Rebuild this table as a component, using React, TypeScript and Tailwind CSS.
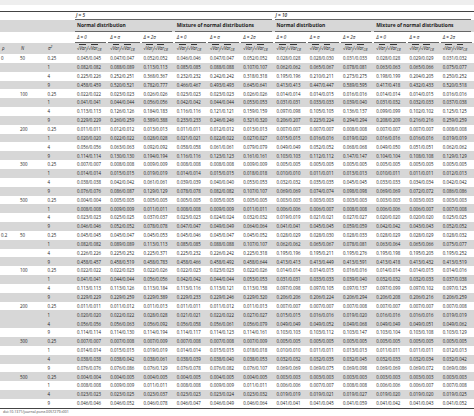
const GRID = "grid grid-cols-[19px_27px_29px_repeat(12,minmax(0,1fr))]";

const DATA: [string, string, string, string][] = [
  ["0", "50", "0.25", "0.045/0.045 0.047/0.047 0.052/0.052 0.046/0.046 0.047/0.047 0.052/0.052 0.028/0.028 0.028/0.030 0.031/0.033 0.028/0.028 0.029/0.029 0.031/0.032"],
  ["", "", "1", "0.082/0.082 0.088/0.089 0.113/0.113 0.085/0.085 0.088/0.088 0.107/0.107 0.062/0.062 0.065/0.067 0.078/0.081 0.063/0.063 0.065/0.066 0.075/0.077"],
  ["", "", "4", "0.225/0.226 0.252/0.251 0.368/0.367 0.232/0.232 0.242/0.242 0.318/0.318 0.195/0.196 0.210/0.211 0.273/0.275 0.198/0.199 0.204/0.205 0.250/0.252"],
  ["", "", "9", "0.458/0.459 0.520/0.521 0.782/0.777 0.466/0.467 0.493/0.493 0.645/0.641 0.413/0.413 0.447/0.447 0.589/0.595 0.417/0.418 0.432/0.433 0.520/0.518"],
  ["", "100", "0.25", "0.022/0.022 0.023/0.023 0.026/0.026 0.023/0.023 0.023/0.023 0.026/0.026 0.014/0.014 0.014/0.015 0.016/0.016 0.014/0.014 0.014/0.015 0.016/0.016"],
  ["", "", "1", "0.041/0.041 0.044/0.044 0.056/0.056 0.042/0.042 0.044/0.044 0.053/0.053 0.031/0.031 0.033/0.033 0.039/0.040 0.031/0.032 0.032/0.033 0.037/0.038"],
  ["", "", "4", "0.113/0.113 0.126/0.126 0.184/0.183 0.116/0.116 0.121/0.121 0.159/0.159 0.097/0.098 0.105/0.105 0.136/0.137 0.099/0.099 0.102/0.102 0.125/0.125"],
  ["", "", "9", "0.229/0.229 0.260/0.259 0.389/0.388 0.233/0.233 0.246/0.246 0.321/0.320 0.206/0.207 0.223/0.224 0.294/0.294 0.208/0.209 0.216/0.216 0.259/0.259"],
  ["", "200", "0.25", "0.011/0.011 0.012/0.012 0.013/0.013 0.011/0.011 0.012/0.012 0.013/0.013 0.007/0.007 0.007/0.007 0.008/0.008 0.007/0.007 0.007/0.007 0.008/0.008"],
  ["", "", "1", "0.020/0.020 0.022/0.022 0.028/0.028 0.021/0.021 0.022/0.022 0.027/0.027 0.015/0.015 0.016/0.016 0.019/0.020 0.016/0.016 0.016/0.016 0.019/0.019"],
  ["", "", "4", "0.056/0.056 0.063/0.063 0.092/0.092 0.058/0.058 0.061/0.061 0.079/0.079 0.049/0.049 0.052/0.052 0.068/0.068 0.049/0.050 0.051/0.051 0.062/0.062"],
  ["", "", "9", "0.114/0.114 0.130/0.130 0.194/0.194 0.116/0.116 0.123/0.123 0.161/0.161 0.103/0.103 0.112/0.112 0.147/0.147 0.104/0.104 0.108/0.108 0.129/0.129"],
  ["", "300", "0.25", "0.007/0.007 0.008/0.008 0.009/0.009 0.008/0.008 0.008/0.008 0.009/0.009 0.005/0.005 0.005/0.005 0.005/0.005 0.005/0.005 0.005/0.005 0.005/0.005"],
  ["", "", "1", "0.014/0.014 0.015/0.015 0.019/0.019 0.014/0.014 0.015/0.015 0.018/0.018 0.010/0.010 0.011/0.011 0.013/0.013 0.010/0.011 0.011/0.011 0.012/0.013"],
  ["", "", "4", "0.038/0.038 0.042/0.042 0.061/0.061 0.039/0.039 0.040/0.040 0.053/0.053 0.032/0.032 0.035/0.035 0.045/0.045 0.033/0.033 0.034/0.034 0.042/0.042"],
  ["", "", "9", "0.076/0.076 0.086/0.087 0.129/0.129 0.078/0.078 0.082/0.082 0.107/0.107 0.069/0.069 0.074/0.074 0.098/0.098 0.069/0.069 0.072/0.072 0.086/0.086"],
  ["", "500", "0.25", "0.004/0.004 0.005/0.005 0.005/0.005 0.005/0.005 0.005/0.005 0.005/0.005 0.003/0.003 0.003/0.003 0.003/0.003 0.003/0.003 0.003/0.003 0.003/0.003"],
  ["", "", "1", "0.008/0.008 0.009/0.009 0.011/0.011 0.008/0.008 0.009/0.009 0.011/0.011 0.006/0.006 0.006/0.007 0.008/0.008 0.006/0.006 0.006/0.007 0.007/0.008"],
  ["", "", "4", "0.023/0.023 0.025/0.025 0.037/0.037 0.023/0.023 0.024/0.024 0.032/0.032 0.019/0.019 0.021/0.021 0.027/0.027 0.020/0.020 0.020/0.020 0.025/0.025"],
  ["", "", "9", "0.046/0.046 0.052/0.052 0.078/0.078 0.047/0.047 0.049/0.049 0.064/0.064 0.041/0.041 0.045/0.045 0.059/0.059 0.042/0.042 0.043/0.043 0.052/0.052"],
  ["0.2", "50", "0.25", "0.045/0.045 0.045/0.047 0.045/0.053 0.045/0.046 0.045/0.047 0.045/0.052 0.028/0.029 0.028/0.030 0.028/0.033 0.028/0.029 0.028/0.029 0.028/0.032"],
  ["", "", "1", "0.082/0.082 0.089/0.089 0.113/0.113 0.085/0.085 0.088/0.088 0.107/0.107 0.062/0.062 0.065/0.067 0.078/0.081 0.063/0.064 0.065/0.066 0.075/0.077"],
  ["", "", "4", "0.226/0.226 0.225/0.252 0.225/0.371 0.225/0.232 0.226/0.242 0.225/0.318 0.195/0.196 0.195/0.211 0.195/0.276 0.195/0.198 0.195/0.205 0.195/0.252"],
  ["", "", "9", "0.458/0.457 0.458/0.519 0.458/0.783 0.458/0.466 0.458/0.492 0.458/0.644 0.413/0.413 0.413/0.449 0.413/0.591 0.413/0.418 0.413/0.432 0.413/0.519"],
  ["", "100", "0.25", "0.022/0.022 0.022/0.023 0.022/0.026 0.022/0.023 0.023/0.023 0.022/0.026 0.014/0.014 0.014/0.015 0.016/0.016 0.014/0.014 0.014/0.015 0.014/0.016"],
  ["", "", "1", "0.041/0.041 0.044/0.044 0.056/0.056 0.042/0.042 0.044/0.044 0.053/0.053 0.031/0.031 0.033/0.033 0.039/0.040 0.032/0.032 0.032/0.033 0.037/0.038"],
  ["", "", "4", "0.113/0.113 0.113/0.126 0.113/0.184 0.113/0.116 0.113/0.121 0.113/0.158 0.097/0.098 0.097/0.105 0.097/0.137 0.097/0.099 0.097/0.102 0.097/0.125"],
  ["", "", "9", "0.229/0.229 0.229/0.259 0.229/0.389 0.229/0.233 0.229/0.246 0.229/0.320 0.206/0.206 0.206/0.224 0.206/0.294 0.206/0.208 0.206/0.216 0.206/0.259"],
  ["", "200", "0.25", "0.011/0.011 0.011/0.012 0.011/0.013 0.011/0.011 0.011/0.012 0.011/0.013 0.007/0.007 0.007/0.007 0.007/0.008 0.007/0.007 0.007/0.007 0.007/0.008"],
  ["", "", "1", "0.020/0.020 0.022/0.022 0.028/0.028 0.021/0.021 0.022/0.022 0.027/0.027 0.015/0.015 0.016/0.016 0.019/0.020 0.016/0.016 0.016/0.016 0.019/0.019"],
  ["", "", "4", "0.056/0.056 0.056/0.063 0.056/0.092 0.056/0.058 0.056/0.061 0.056/0.079 0.049/0.049 0.049/0.052 0.049/0.068 0.049/0.049 0.049/0.051 0.049/0.062"],
  ["", "", "9", "0.114/0.114 0.114/0.130 0.114/0.194 0.114/0.117 0.114/0.123 0.114/0.161 0.103/0.103 0.103/0.112 0.103/0.147 0.103/0.104 0.103/0.108 0.103/0.129"],
  ["", "300", "0.25", "0.007/0.007 0.007/0.008 0.007/0.009 0.007/0.008 0.007/0.008 0.007/0.009 0.005/0.005 0.005/0.005 0.005/0.005 0.005/0.005 0.005/0.005 0.005/0.005"],
  ["", "", "1", "0.014/0.014 0.015/0.015 0.019/0.019 0.014/0.014 0.015/0.015 0.018/0.018 0.010/0.010 0.011/0.011 0.013/0.013 0.011/0.011 0.011/0.011 0.012/0.013"],
  ["", "", "4", "0.038/0.038 0.038/0.042 0.038/0.061 0.038/0.039 0.038/0.040 0.038/0.053 0.032/0.032 0.032/0.035 0.032/0.045 0.032/0.033 0.032/0.034 0.032/0.042"],
  ["", "", "9", "0.076/0.076 0.076/0.086 0.076/0.129 0.076/0.078 0.076/0.082 0.076/0.107 0.069/0.069 0.069/0.075 0.069/0.098 0.069/0.069 0.069/0.072 0.069/0.086"],
  ["", "500", "0.25", "0.004/0.004 0.004/0.005 0.004/0.005 0.004/0.005 0.004/0.005 0.004/0.005 0.003/0.003 0.003/0.003 0.003/0.003 0.003/0.003 0.003/0.003 0.003/0.003"],
  ["", "", "1", "0.008/0.008 0.009/0.009 0.011/0.011 0.008/0.008 0.009/0.009 0.011/0.011 0.006/0.006 0.007/0.007 0.008/0.008 0.006/0.006 0.006/0.007 0.007/0.008"],
  ["", "", "4", "0.023/0.023 0.023/0.025 0.023/0.037 0.023/0.023 0.023/0.024 0.023/0.032 0.019/0.019 0.019/0.021 0.019/0.027 0.019/0.020 0.019/0.020 0.019/0.025"],
  ["", "", "9", "0.046/0.046 0.046/0.052 0.046/0.078 0.046/0.047 0.046/0.049 0.046/0.064 0.041/0.041 0.041/0.045 0.041/0.059 0.041/0.042 0.041/0.043 0.041/0.052"],
];

const DELTAS = ["Δ = 0", "Δ = σ", "Δ = 2σ"];

function VarLabel() {
  return (
    <span className="whitespace-nowrap">
      √<span className="border-t-[0.5px] border-[#333] italic">Var</span>
      <span className="relative top-[1px] text-[3.2px] italic">J</span>/√
      <span className="border-t-[0.5px] border-[#333] italic">Var</span>
      <span className="relative top-[1px] text-[3.2px] italic">CB</span>
    </span>
  );
}

export default function App() {
  return (
    <div className="w-[474px] h-[416px] bg-white text-[#1c1c1c] font-['Open_Sans',sans-serif] text-[4.4px] leading-none overflow-hidden">
      <div className="h-[5px] bg-[#eeeeee]" />
      <div className="h-[6px]" />
      <div className="h-px bg-[#444]" />

      {/* J row */}
      <div className={`${GRID} h-[8px]`}>
        <div className="col-span-3" />
        {["J = 5", "J = 10"].map((j) => (
          <div key={j} className="col-span-6 mr-[3px] border-b-[0.6px] border-[#666] flex items-center pl-[1px] italic font-semibold text-[4.6px]">
            {j}
          </div>
        ))}
      </div>

      {/* distribution row */}
      <div className={`${GRID} h-[12px] bg-[#d7d7d7]`}>
        <div className="col-span-3" />
        {["Normal distribution", "Mixture of normal distributions", "Normal distribution", "Mixture of normal distributions"].map((d, i) => (
          <div key={i} className="col-span-3 mr-[3px] border-b-[0.6px] border-[#666] flex items-center pl-[2px] font-bold text-[4.9px]">
            {d}
          </div>
        ))}
      </div>

      {/* delta row */}
      <div className={`${GRID} h-[11px]`}>
        <div className="col-span-3" />
        {Array.from({ length: 12 }).map((_, i) => (
          <div key={i} className="mr-[2px] border-b-[0.6px] border-[#666] flex items-center pl-[2px] italic">
            {DELTAS[i % 3]}
          </div>
        ))}
      </div>

      {/* column header row */}
      <div className={`${GRID} h-[11px] bg-[#d7d7d7]`}>
        <div className="flex items-center pl-[2px] italic">ρ</div>
        <div className="flex items-center pl-[2px] italic">N</div>
        <div className="flex items-center pl-[2px] italic">
          σ<span className="relative -top-[1px] text-[3.2px]">2</span>
        </div>
        {Array.from({ length: 12 }).map((_, i) => (
          <div key={i} className="flex items-center pl-[2px]">
            <VarLabel />
          </div>
        ))}
      </div>

      {/* data rows */}
      {DATA.map(([rho, n, s2, vals], i) => {
        const gray = i <= 29 ? i % 2 === 1 : i % 2 === 0;
        return (
          <div key={i} className={`${GRID} h-[8.85px] ${gray ? "bg-[#d7d7d7]" : "bg-white"}`}>
            <div className="flex items-center pl-[1px]">{rho}</div>
            <div className="flex items-center pl-[1px]">{n}</div>
            <div className="flex items-center pl-[1.5px]">{s2}</div>
            {vals.split(" ").map((v, j) => (
              <div key={j} className="flex items-center pl-[2px] whitespace-nowrap">
                {v}
              </div>
            ))}
          </div>
        );
      })}

      <div className="h-px bg-[#444]" />
      <div className="flex items-center h-[7px] pl-[3px] text-[3.6px] text-[#444]">
        doi:10.1371/journal.pone.0057279.t001
      </div>
    </div>
  );
}
